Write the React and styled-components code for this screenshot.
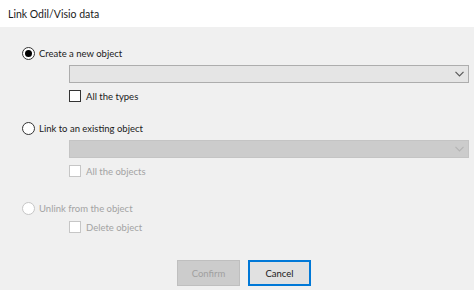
import React from "react";
import styled, { createGlobalStyle } from "styled-components";

const GlobalStyle = createGlobalStyle`
  body {
    margin: 0;
    background: #f0f0f0;
    font-family: Lato, "Liberation Sans", sans-serif;
    font-size: 9.5px;
    color: #1a1a1a;
  }
`;

const App = () => {
  return (
    <>
      <GlobalStyle />
      <Dialog>
        <TitleBar>Link Odil/Visio data</TitleBar>
        <Body>
          <Radio checked label="Create a new object" top={19} />
          <Indent>
            <Combo top={5} />
            <Check label="All the types" top={7} />
          </Indent>

          <Radio label="Link to an existing object" top={19} />
          <Indent>
            <Combo top={5} disabled />
            <Check label="All the objects" top={7} disabled />
          </Indent>

          <Radio label="Unlink from the object" top={24} disabled />
          <Indent>
            <Check label="Delete object" top={6} disabled />
          </Indent>

          <Footer>
            <Button disabled>Confirm</Button>
            <Button focused>Cancel</Button>
          </Footer>
        </Body>
      </Dialog>
    </>
  );
};

export default App;

const Radio = ({ checked, label, top, disabled }) => (
  <OptionRow $top={top} $disabled={disabled}>
    <RadioCircle $disabled={disabled}>{checked && <RadioDot />}</RadioCircle>
    <span>{label}</span>
  </OptionRow>
);

const Check = ({ label, top, disabled }) => (
  <OptionRow $top={top} $disabled={disabled} $gap={5}>
    <CheckBox $disabled={disabled} />
    <span>{label}</span>
  </OptionRow>
);

const Combo = ({ top, disabled }) => (
  <ComboBox $top={top} $disabled={disabled}>
    <svg width="9" height="6" viewBox="0 0 9 6">
      <path d="M0.5 0.8 L4.5 4.8 L8.5 0.8" fill="none" stroke={disabled ? "#b4b4b4" : "#5a5a5a"} strokeWidth="1.2" />
    </svg>
  </ComboBox>
);

const Dialog = styled.div`
  width: 474px;
  height: 290px;
  display: flex;
  flex-direction: column;
`;

const TitleBar = styled.div`
  height: 27px;
  background: #fff;
  display: flex;
  align-items: center;
  padding-left: 8px;
  box-sizing: border-box;
  font-size: 10.5px;
`;

const Body = styled.div`
  display: flex;
  flex-direction: column;
  padding: 0 5px 0 22px;
`;

const Indent = styled.div`
  display: flex;
  flex-direction: column;
  padding-left: 47px;
`;

const OptionRow = styled.div`
  display: flex;
  align-items: center;
  gap: ${(p) => p.$gap || 4}px;
  height: ${(p) => (p.$gap ? 12 : 14)}px;
  margin-top: ${(p) => p.$top}px;
  color: ${(p) => (p.$disabled ? "#a3a3a3" : "#1a1a1a")};
  white-space: nowrap;
`;

const RadioCircle = styled.div`
  width: 13px;
  height: 13px;
  box-sizing: border-box;
  border: 1px solid ${(p) => (p.$disabled ? "#c6c6c6" : "#333")};
  border-radius: 50%;
  background: #fff;
  display: flex;
  align-items: center;
  justify-content: center;
  flex-shrink: 0;
`;

const RadioDot = styled.div`
  width: 7px;
  height: 7px;
  border-radius: 50%;
  background: #000;
`;

const CheckBox = styled.div`
  width: 12px;
  height: 12px;
  box-sizing: border-box;
  border: 1px solid ${(p) => (p.$disabled ? "#c6c6c6" : "#333")};
  background: #fff;
  flex-shrink: 0;
`;

const ComboBox = styled.div`
  margin-top: ${(p) => p.$top}px;
  height: 18px;
  box-sizing: border-box;
  border: 1px solid ${(p) => (p.$disabled ? "#c4c4c4" : "#adadad")};
  background: ${(p) => (p.$disabled ? "#cccccc" : "#e5e5e5")};
  display: flex;
  align-items: center;
  justify-content: flex-end;
  padding-right: 4px;
`;

const Footer = styled.div`
  display: flex;
  gap: 8px;
  margin-top: 27px;
  padding-left: 155px;
`;

const Button = styled.div`
  width: 63px;
  height: 26px;
  box-sizing: border-box;
  display: flex;
  align-items: center;
  justify-content: center;
  background: ${(p) => (p.disabled ? "#cccccc" : "#e1e1e1")};
  border: ${(p) => (p.focused ? "2px solid #0078d7" : "1px solid #bfbfbf")};
  color: ${(p) => (p.disabled ? "#a0a0a0" : "#1a1a1a")};
`;
